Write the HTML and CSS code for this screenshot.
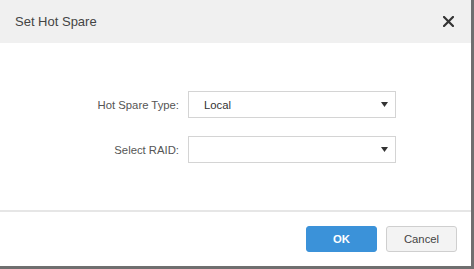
FILE: index.html
```html
<!DOCTYPE html>
<html lang="en">
<head>
    <meta charset="UTF-8">
    <title>Set Hot Spare</title>
    <link rel="stylesheet" href="styles.css">
</head>
<body>
    <div class="modal">
        <div class="modal-header">
            <div class="title">Set Hot Spare</div>
            <span class="close">
                <svg width="11" height="11" viewBox="0 0 11 11"><path d="M1 1 L10 10 M10 1 L1 10" stroke="#333" stroke-width="2.2" stroke-linecap="square"/></svg>
            </span>
        </div>
        <div class="modal-body">
            <div class="field">
                <label>Hot Spare Type:</label>
                <div class="select">
                    <span class="value">Local</span>
                    <svg class="arrow" width="7" height="5" viewBox="0 0 7 5"><polygon points="0,0 7,0 3.5,5" fill="#333"/></svg>
                </div>
            </div>
            <div class="field">
                <label>Select RAID:</label>
                <div class="select">
                    <span class="value"></span>
                    <svg class="arrow" width="7" height="5" viewBox="0 0 7 5"><polygon points="0,0 7,0 3.5,5" fill="#333"/></svg>
                </div>
            </div>
        </div>
        <div class="modal-footer">
            <button class="btn btn-ok">OK</button>
            <button class="btn btn-cancel">Cancel</button>
        </div>
    </div>
</body>
</html>
```

FILE: styles.css
```css
body {
    margin: 0;
    background: #6f6f6f;
    font-family: 'Liberation Sans', Arial, sans-serif;
}

.modal {
    width: 471px;
    height: 266px;
    background: #fff;
    display: flex;
    flex-direction: column;
}

.modal-header {
    height: 43px;
    background: #f0f0f0;
    display: flex;
    align-items: center;
    justify-content: space-between;
    padding: 0 17px 0 15px;
}

.modal-header .title {
    font-size: 13px;
    color: #444;
}

.close {
    display: flex;
    margin-top: -1px;
}

.modal-body {
    height: 167px;
    padding-top: 48px;
    box-sizing: border-box;
    display: flex;
    flex-direction: column;
    gap: 18px;
}

.field {
    display: flex;
    align-items: center;
}

.field label {
    width: 179px;
    margin-right: 9px;
    text-align: right;
    font-size: 11.3px;
    color: #555;
}

.select {
    width: 208px;
    height: 27px;
    box-sizing: border-box;
    border: 1px solid #d4d4d4;
    display: flex;
    align-items: center;
    justify-content: space-between;
    padding: 0 7px 0 15px;
}

.select .value {
    font-size: 11.3px;
    color: #333;
}

.modal-footer {
    flex: 1;
    border-top: 2px solid #e6e6e6;
    display: flex;
    justify-content: flex-end;
    align-items: flex-start;
    gap: 9px;
    padding: 14px 14px 0 0;
}

.btn {
    width: 71px;
    height: 26px;
    border-radius: 3px;
    font-family: 'Liberation Sans', Arial, sans-serif;
    font-size: 11.3px;
    cursor: pointer;
}

.btn-ok {
    background: #3b92d9;
    border: 1px solid #3b92d9;
    color: #fff;
    font-weight: bold;
}

.btn-cancel {
    background: #f3f3f3;
    border: 1px solid #cfcfcf;
    color: #444;
}
```
